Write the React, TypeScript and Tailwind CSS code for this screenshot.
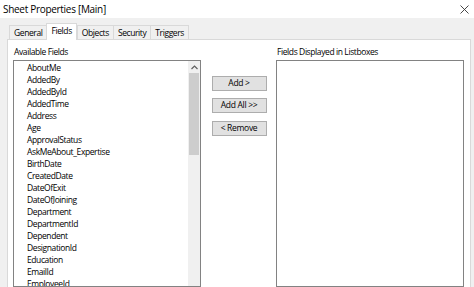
import React from "react";

const fields = [
  "AboutMe",
  "AddedBy",
  "AddedById",
  "AddedTime",
  "Address",
  "Age",
  "ApprovalStatus",
  "AskMeAbout_Expertise",
  "BirthDate",
  "CreatedDate",
  "DateOfExit",
  "DateOfJoining",
  "Department",
  "DepartmentId",
  "Dependent",
  "DesignationId",
  "Education",
  "EmailId",
  "EmployeeId",
];

const tabs = ["General", "Fields", "Objects", "Security", "Triggers"];

export default function App() {
  return (
    <div
      className="w-[474px] h-[287px] overflow-hidden bg-[#f0f0f0] flex flex-col text-[#000]"
      style={{ fontFamily: '"Open Sans", "Noto Sans", sans-serif' }}
    >
      {/* Title bar */}
      <div className="h-[18px] bg-white flex items-center justify-between pl-[3px] pr-[4px] shrink-0">
        <span className="text-[10px] leading-none tracking-[-0.3px]">Sheet Properties [Main]</span>
        <svg width="9" height="9" viewBox="0 0 9 9" className="mr-[1px]">
          <path d="M0.5 0.5 L8.5 8.5 M8.5 0.5 L0.5 8.5" stroke="#333" strokeWidth="0.9" />
        </svg>
      </div>

      {/* Tabs */}
      <div className="flex items-end pl-[9px] h-[21px] shrink-0">
        {tabs.map((t) =>
          t === "Fields" ? (
            <div
              key={t}
              className="h-[17px] px-[4px] bg-white border border-b-0 border-[#d9d9d9] text-[8.5px] leading-[14px] tracking-[-0.4px] -mb-px relative z-10"
            >
              {t}
            </div>
          ) : (
            <div
              key={t}
              className="h-[14px] px-[4px] bg-[#f0f0f0] border border-b-0 border-r-0 border-[#d9d9d9] last:border-r text-[8.5px] leading-[13px] tracking-[-0.4px]"
            >
              {t}
            </div>
          )
        )}
      </div>

      {/* Panel */}
      <div className="flex-1 ml-[7px] mr-[3px] bg-white border border-[#d9d9d9] border-b-0 flex pt-[3px] pl-[5px] min-h-0">
        {/* Left column */}
        <div className="flex flex-col w-[188px] min-h-0">
          <div className="text-[8.5px] leading-[14px] tracking-[-0.4px] pl-[1px] pt-[2px] h-[17px]">Available Fields</div>
          <div className="flex-1 border border-[#828282] flex min-h-0 overflow-hidden">
            <div className="flex-1 pl-[13px] pt-[1px]">
              {fields.map((f) => (
                <div key={f} className="text-[8.5px] leading-[12px] h-[12px] tracking-[-0.4px] whitespace-nowrap">
                  {f}
                </div>
              ))}
            </div>
            <div className="w-[12px] bg-[#f0f0f0] flex flex-col">
              <div className="h-[12px] flex items-center justify-center">
                <svg width="7" height="5" viewBox="0 0 7 5">
                  <path d="M0.5 4 L3.5 1 L6.5 4" stroke="#606060" strokeWidth="1.2" fill="none" />
                </svg>
              </div>
              <div className="mx-[1px] h-[82px] bg-[#cdcdcd]" />
            </div>
          </div>
        </div>

        {/* Buttons */}
        <div className="w-[75px] flex flex-col items-center pt-[33px] pl-[1px]">
          <button className="w-[55px] h-[15px] bg-[#e1e1e1] border border-[#adadad] text-[8.5px] leading-none tracking-[-0.3px]">
            Add &gt;
          </button>
          <button className="mt-[7px] w-[55px] h-[15px] bg-[#e1e1e1] border border-[#adadad] text-[8.5px] leading-none tracking-[-0.3px]">
            Add All &gt;&gt;
          </button>
          <button className="mt-[8px] w-[55px] h-[15px] bg-[#e1e1e1] border border-[#adadad] text-[8.5px] leading-none tracking-[-0.3px]">
            &lt; Remove
          </button>
        </div>

        {/* Right column */}
        <div className="flex flex-col w-[188px] min-h-0">
          <div className="text-[8.5px] leading-[14px] tracking-[-0.4px] pl-[1px] pt-[2px] h-[17px]">Fields Displayed in Listboxes</div>
          <div className="flex-1 border border-[#828282] bg-white" />
        </div>
      </div>
    </div>
  );
}
